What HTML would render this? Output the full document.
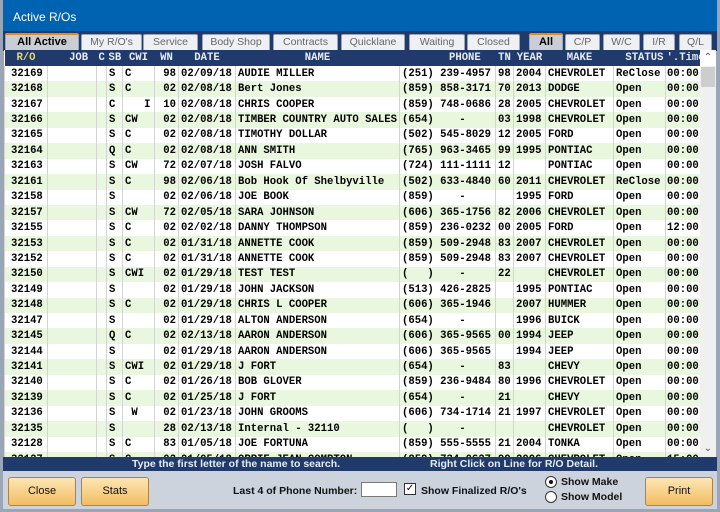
<!DOCTYPE html>
<html><head><meta charset="utf-8"><style>
*{box-sizing:border-box;margin:0;padding:0}
body{width:720px;height:512px;overflow:hidden;background:#9aa6b8;font-family:"Liberation Sans",sans-serif;position:relative}
#title{position:absolute;left:3px;top:0;width:714px;height:33px;background:#0063b1;color:#fff;font-size:12px;padding:10px 10px}
#tabs{position:absolute;left:3px;top:31px;width:714px;height:20px;background:#1f3a6b}
.tab{position:absolute;top:3px;height:17px;background:#eef0f4;border:1px solid #9aa6b8;border-bottom:none;color:#666;font-size:10.5px;text-align:center;line-height:15px;border-radius:2px 2px 0 0}
.tab.sel{background:#c9ced6;color:#000;font-weight:bold;border-top:2px solid #e08a2a;font-size:11px;top:2px;height:18px}
#grid{position:absolute;left:4px;top:50px;width:696px;height:407px;overflow:hidden;background:#fff}
table{border-collapse:collapse;table-layout:fixed;width:696px;font-family:"Liberation Mono",monospace;font-size:10.6px;font-weight:bold;color:#000}
th{background:#1f3a6b;color:#e8ecf2;height:16px;font-weight:bold;white-space:pre;overflow:hidden;padding:0 2px}
td{height:15.45px;border-left:1px solid #d4d4d4;white-space:pre;overflow:hidden;padding:0 2px;line-height:14px}
td:first-child{padding-left:6px}
td:last-child,th:last-child{padding:0 0 0 1px;overflow:visible}
tr:nth-child(even) td{background:#fff}
tr:nth-child(odd) td{background:#eaf7df}
.r{text-align:right}
#sb{position:absolute;left:700px;top:50px;width:16px;height:407px;background:#f0f0f0}
#status{position:absolute;left:3px;top:457px;width:714px;height:14px;background:#1f3a6b;color:#e8ecf2;font-size:10.5px;font-weight:bold;line-height:14px}
#bottom{position:absolute;left:3px;top:471px;width:714px;height:38px;background:#cdd3dc}
.btn{position:absolute;top:6px;height:29px;border:1px solid #a8844c;border-radius:3px;background:linear-gradient(#fde6b4,#f2bd62);font-size:11px;text-align:center;line-height:27px;color:#111}
.lbl{position:absolute;font-size:10.5px;font-weight:bold;color:#111}
</style></head><body>
<div id="title">Active R/Os</div>
<div id="tabs">
<div class="tab sel" style="left:2px;width:74px">All Active</div>
<div class="tab" style="left:78px;width:61px">My R/O's</div>
<div class="tab" style="left:140px;width:55px">Service</div>
<div class="tab" style="left:199px;width:68px">Body Shop</div>
<div class="tab" style="left:270px;width:65px">Contracts</div>
<div class="tab" style="left:338px;width:64px">Quicklane</div>
<div class="tab" style="left:406px;width:56px">Waiting</div>
<div class="tab" style="left:464px;width:53px">Closed</div>
<div class="tab sel" style="left:526px;width:34px">All</div>
<div class="tab" style="left:562px;width:35px">C/P</div>
<div class="tab" style="left:600px;width:37px">W/C</div>
<div class="tab" style="left:640px;width:32px">I/R</div>
<div class="tab" style="left:676px;width:33px">Q/L</div>
</div>
<div id="grid"><table>
<colgroup><col style="width:43px"><col style="width:49px"><col style="width:10px"><col style="width:16px"><col style="width:32px"><col style="width:24px"><col style="width:57px"><col style="width:164px"><col style="width:96px"><col style="width:18px"><col style="width:32px"><col style="width:68px"><col style="width:52px"><col style="width:35px"></colgroup>
<tr><th style="color:#e8d870">R/O</th><th class="r">JOB </th><th>C</th><th>SB</th><th>CWI</th><th>WN</th><th>DATE</th><th>NAME</th><th class="r">PHONE  </th><th>TN</th><th>YEAR</th><th>MAKE</th><th class="r">STATUS</th><th>'.Time</th></tr>
<tr><td>32169</td><td></td><td></td><td>S</td><td>C</td><td class="r">98</td><td>02/09/18</td><td>AUDIE MILLER</td><td>(251) 239-4957</td><td>98</td><td>2004</td><td>CHEVROLET</td><td>ReClose</td><td>00:00</td></tr>
<tr><td>32168</td><td></td><td></td><td>S</td><td>C</td><td class="r">02</td><td>02/08/18</td><td>Bert Jones</td><td>(859) 858-3171</td><td>70</td><td>2013</td><td>DODGE</td><td>Open</td><td>00:00</td></tr>
<tr><td>32167</td><td></td><td></td><td>C</td><td>   I</td><td class="r">10</td><td>02/08/18</td><td>CHRIS COOPER</td><td>(859) 748-0686</td><td>28</td><td>2005</td><td>CHEVROLET</td><td>Open</td><td>00:00</td></tr>
<tr><td>32166</td><td></td><td></td><td>S</td><td>CW</td><td class="r">02</td><td>02/08/18</td><td>TIMBER COUNTRY AUTO SALES</td><td>(654)    -</td><td>03</td><td>1998</td><td>CHEVROLET</td><td>Open</td><td>00:00</td></tr>
<tr><td>32165</td><td></td><td></td><td>S</td><td>C</td><td class="r">02</td><td>02/08/18</td><td>TIMOTHY DOLLAR</td><td>(502) 545-8029</td><td>12</td><td>2005</td><td>FORD</td><td>Open</td><td>00:00</td></tr>
<tr><td>32164</td><td></td><td></td><td>Q</td><td>C</td><td class="r">02</td><td>02/08/18</td><td>ANN SMITH</td><td>(765) 963-3465</td><td>99</td><td>1995</td><td>PONTIAC</td><td>Open</td><td>00:00</td></tr>
<tr><td>32163</td><td></td><td></td><td>S</td><td>CW</td><td class="r">72</td><td>02/07/18</td><td>JOSH FALVO</td><td>(724) 111-1111</td><td>12</td><td></td><td>PONTIAC</td><td>Open</td><td>00:00</td></tr>
<tr><td>32161</td><td></td><td></td><td>S</td><td>C</td><td class="r">98</td><td>02/06/18</td><td>Bob Hook Of Shelbyville</td><td>(502) 633-4840</td><td>60</td><td>2011</td><td>CHEVROLET</td><td>ReClose</td><td>00:00</td></tr>
<tr><td>32158</td><td></td><td></td><td>S</td><td></td><td class="r">02</td><td>02/06/18</td><td>JOE BOOK</td><td>(859)    -</td><td></td><td>1995</td><td>FORD</td><td>Open</td><td>00:00</td></tr>
<tr><td>32157</td><td></td><td></td><td>S</td><td>CW</td><td class="r">72</td><td>02/05/18</td><td>SARA JOHNSON</td><td>(606) 365-1756</td><td>82</td><td>2006</td><td>CHEVROLET</td><td>Open</td><td>00:00</td></tr>
<tr><td>32155</td><td></td><td></td><td>S</td><td>C</td><td class="r">02</td><td>02/02/18</td><td>DANNY THOMPSON</td><td>(859) 236-0232</td><td>00</td><td>2005</td><td>FORD</td><td>Open</td><td>12:00</td></tr>
<tr><td>32153</td><td></td><td></td><td>S</td><td>C</td><td class="r">02</td><td>01/31/18</td><td>ANNETTE COOK</td><td>(859) 509-2948</td><td>83</td><td>2007</td><td>CHEVROLET</td><td>Open</td><td>00:00</td></tr>
<tr><td>32152</td><td></td><td></td><td>S</td><td>C</td><td class="r">02</td><td>01/31/18</td><td>ANNETTE COOK</td><td>(859) 509-2948</td><td>83</td><td>2007</td><td>CHEVROLET</td><td>Open</td><td>00:00</td></tr>
<tr><td>32150</td><td></td><td></td><td>S</td><td>CWI</td><td class="r">02</td><td>01/29/18</td><td>TEST TEST</td><td>(   )    -</td><td>22</td><td></td><td>CHEVROLET</td><td>Open</td><td>00:00</td></tr>
<tr><td>32149</td><td></td><td></td><td>S</td><td></td><td class="r">02</td><td>01/29/18</td><td>JOHN JACKSON</td><td>(513) 426-2825</td><td></td><td>1995</td><td>PONTIAC</td><td>Open</td><td>00:00</td></tr>
<tr><td>32148</td><td></td><td></td><td>S</td><td>C</td><td class="r">02</td><td>01/29/18</td><td>CHRIS L COOPER</td><td>(606) 365-1946</td><td></td><td>2007</td><td>HUMMER</td><td>Open</td><td>00:00</td></tr>
<tr><td>32147</td><td></td><td></td><td>S</td><td></td><td class="r">02</td><td>01/29/18</td><td>ALTON ANDERSON</td><td>(654)    -</td><td></td><td>1996</td><td>BUICK</td><td>Open</td><td>00:00</td></tr>
<tr><td>32145</td><td></td><td></td><td>Q</td><td>C</td><td class="r">02</td><td>02/13/18</td><td>AARON ANDERSON</td><td>(606) 365-9565</td><td>00</td><td>1994</td><td>JEEP</td><td>Open</td><td>00:00</td></tr>
<tr><td>32144</td><td></td><td></td><td>S</td><td></td><td class="r">02</td><td>01/29/18</td><td>AARON ANDERSON</td><td>(606) 365-9565</td><td></td><td>1994</td><td>JEEP</td><td>Open</td><td>00:00</td></tr>
<tr><td>32141</td><td></td><td></td><td>S</td><td>CWI</td><td class="r">02</td><td>01/29/18</td><td>J FORT</td><td>(654)    -</td><td>83</td><td></td><td>CHEVY</td><td>Open</td><td>00:00</td></tr>
<tr><td>32140</td><td></td><td></td><td>S</td><td>C</td><td class="r">02</td><td>01/26/18</td><td>BOB GLOVER</td><td>(859) 236-9484</td><td>80</td><td>1996</td><td>CHEVROLET</td><td>Open</td><td>00:00</td></tr>
<tr><td>32139</td><td></td><td></td><td>S</td><td>C</td><td class="r">02</td><td>01/25/18</td><td>J FORT</td><td>(654)    -</td><td>21</td><td></td><td>CHEVY</td><td>Open</td><td>00:00</td></tr>
<tr><td>32136</td><td></td><td></td><td>S</td><td> W</td><td class="r">02</td><td>01/23/18</td><td>JOHN GROOMS</td><td>(606) 734-1714</td><td>21</td><td>1997</td><td>CHEVROLET</td><td>Open</td><td>00:00</td></tr>
<tr><td>32135</td><td></td><td></td><td>S</td><td></td><td class="r">28</td><td>02/13/18</td><td>Internal - 32110</td><td>(   )    -</td><td></td><td></td><td>CHEVROLET</td><td>Open</td><td>00:00</td></tr>
<tr><td>32128</td><td></td><td></td><td>S</td><td>C</td><td class="r">83</td><td>01/05/18</td><td>JOE FORTUNA</td><td>(859) 555-5555</td><td>21</td><td>2004</td><td>TONKA</td><td>Open</td><td>00:00</td></tr>
<tr><td>32127</td><td></td><td></td><td>S</td><td>C</td><td class="r">02</td><td>01/05/18</td><td>ORRIE JEAN COMPTON</td><td>(859) 734-0627</td><td>99</td><td>2006</td><td>CHEVROLET</td><td>Open</td><td>15:00</td></tr>
</table></div>
<div id="sb">
<div style="height:16px;background:#fff;color:#555;font-size:10px;text-align:center;line-height:16px">&#8963;</div>
<div style="position:absolute;top:17px;left:1px;width:14px;height:20px;background:#cdcdcd"></div>
<div style="position:absolute;bottom:0;width:16px;height:14px;color:#555;font-size:10px;text-align:center;line-height:12px">&#8964;</div>
</div>
<div id="status"><span style="position:absolute;left:129px">Type the first letter of the name to search.</span><span style="position:absolute;left:427px">Right Click on Line for R/O Detail.</span></div>
<div id="bottom">
<div class="btn" style="left:5px;width:68px">Close</div>
<div class="btn" style="left:78px;width:68px">Stats</div>
<div class="lbl" style="left:230px;top:14px">Last 4 of Phone Number:</div>
<div style="position:absolute;left:358px;top:11px;width:36px;height:15px;background:#fff;border:1px solid #7a7a7a"></div>
<div style="position:absolute;left:401px;top:12px;width:12px;height:12px;background:#fff;border:1px solid #333;font-size:10px;line-height:10px;text-align:center">&#10003;</div>
<div class="lbl" style="left:418px;top:14px">Show Finalized R/O's</div>
<div style="position:absolute;left:542px;top:5px;width:12px;height:12px;border-radius:50%;background:#fff;border:1px solid #333"><div style="position:absolute;left:3px;top:3px;width:4px;height:4px;border-radius:50%;background:#111"></div></div>
<div class="lbl" style="left:558px;top:5px">Show Make</div>
<div style="position:absolute;left:542px;top:20px;width:12px;height:12px;border-radius:50%;background:#fff;border:1px solid #333"></div>
<div class="lbl" style="left:558px;top:20px">Show Model</div>
<div class="btn" style="left:642px;width:68px">Print</div>
</div>
</body></html>
